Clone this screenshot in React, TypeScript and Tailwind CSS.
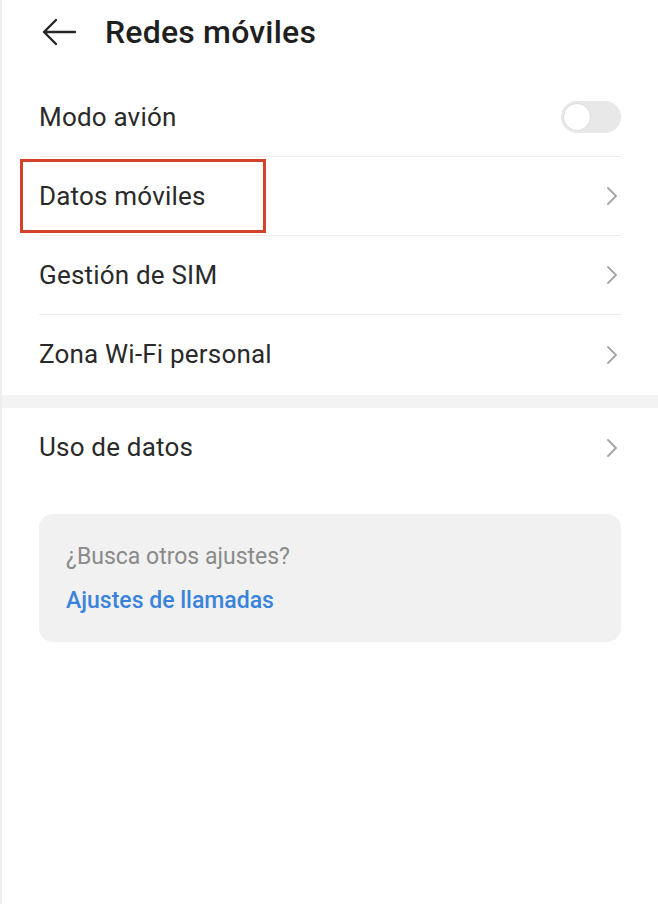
import React from 'react';

const Chevron = () => (
  <svg width="14" height="22" viewBox="0 0 14 22" fill="none" className="shrink-0 mr-[2px]">
    <path d="M3 3 L11 11 L3 19" stroke="#a8a8a8" strokeWidth="2" strokeLinecap="round" strokeLinejoin="round" />
  </svg>
);

const Row = ({ label, children, last }: { label: string; children?: React.ReactNode; last?: boolean }) => (
  <div className={`h-[79px] flex items-center justify-between ${last ? '' : 'border-b border-[#ececec]'}`}>
    <span className="text-[26px] tracking-[0.2px] text-[#2a2a2a]">{label}</span>
    {children ?? <Chevron />}
  </div>
);

const Toggle = () => (
  <div className="w-[60px] h-[32px] rounded-full bg-[#e8e8e8] p-[2px] flex items-center">
    <div className="w-[28px] h-[28px] rounded-full bg-white border border-[#dcdcdc]" />
  </div>
);

export default function App() {
  return (
    <div className="w-[658px] h-[904px] bg-white border-l-2 border-[#eeeeee]" style={{ fontFamily: 'Roboto, "Noto Sans", sans-serif' }}>
      <header className="h-[64px] flex items-center pl-[39px] gap-[28px]">
        <svg width="36" height="28" viewBox="0 0 36 28" fill="none">
          <path d="M34 14 H4 M15 2 L3 14 L15 26" stroke="#262626" strokeWidth="2.4" strokeLinecap="round" strokeLinejoin="round" />
        </svg>
        <h1 className="text-[32px] font-medium text-[#1f1f1f] tracking-[0.2px]">Redes móviles</h1>
      </header>

      <div className="px-[37px] pt-[14px]">
        <Row label="Modo avión">
          <Toggle />
        </Row>
        <div className="relative">
          <div className="absolute left-[-19px] top-[2px] w-[246px] h-[74px] border-[3px] border-[#d5402b]" />
          <Row label="Datos móviles" />
        </div>
        <Row label="Gestión de SIM" />
        <Row label="Zona Wi-Fi personal" last />
      </div>

      <div className="h-[13px] bg-[#f3f3f3] mt-[1px]" />

      <div className="px-[37px]">
        <Row label="Uso de datos" last />
        <div className="mt-[27px] rounded-[14px] bg-[#f1f1f1] h-[128px] px-[27px] pt-[29px]">
          <p className="text-[23px] text-[#8a8a8a] leading-[28px]">¿Busca otros ajustes?</p>
          <p className="text-[23px] font-medium text-[#3a83dc] leading-[28px] mt-[16px]">Ajustes de llamadas</p>
        </div>
      </div>
    </div>
  );
}
